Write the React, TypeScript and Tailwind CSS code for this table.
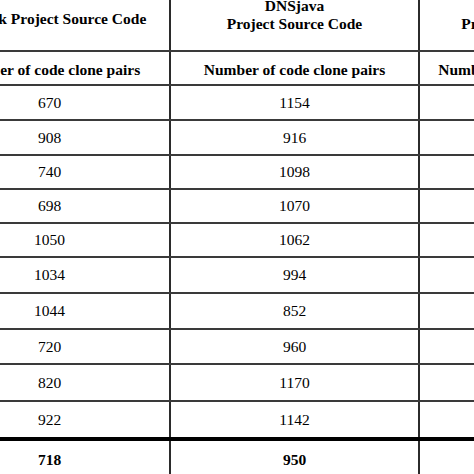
const rows = [
  ['670', '1154', '882'],
  ['908', '916', '1016'],
  ['740', '1098', '934'],
  ['698', '1070', '958'],
  ['1050', '1062', '1002'],
  ['1034', '994', '976'],
  ['1044', '852', '890'],
  ['720', '960', '1048'],
  ['820', '1170', '942'],
  ['922', '1142', '1010'],
]

// row heights (incl. 2px bottom rule) measured off the scan
const heights = ['h-[35px]', 'h-[35px]', 'h-[34px]', 'h-[34px]', 'h-[34px]', 'h-[36px]', 'h-[36px]', 'h-[35px]', 'h-[37px]', 'h-[39px]']

const c1 = 'w-[241px] shrink-0 border-r-2 border-[#2b2b2b] flex items-center justify-center'
const c2 = 'w-[249px] shrink-0 border-r-2 border-[#2b2b2b] flex items-center justify-center'
const c3 = 'w-[218px] shrink-0 flex items-center justify-center'

const h1 = 'w-[241px] shrink-0 border-r-2 border-[#2b2b2b] flex items-start justify-center'
const h2 = 'w-[249px] shrink-0 border-r-2 border-[#2b2b2b] flex items-start justify-center'
const h3 = 'w-[218px] shrink-0 flex items-start justify-center'

export default function App() {
  return (
    <div
      className="w-[474px] h-[474px] overflow-hidden bg-white text-black"
      style={{ fontFamily: '"Liberation Serif", "Times New Roman", serif' }}
    >
      <div className="-ml-[70px] w-[708px] text-[15.5px]">

        {/* Project header */}
        <div className="flex h-[52px] border-b-2 border-[#3a3a3a] font-bold leading-[17.5px]">
          <div className={h1}>
            <span className="mt-[10px] whitespace-nowrap">Outlook Project Source Code</span>
          </div>
          <div className={h2}>
            <div className="-mt-[3px] text-center whitespace-nowrap">
              <div>DNSjava</div>
              <div>Project Source Code</div>
            </div>
          </div>
          <div className={h3}>
            <div className="-mt-[3px] text-center whitespace-nowrap">
              <div>JHotDraw</div>
              <div>Project Source Code</div>
            </div>
          </div>
        </div>

        {/* Column labels */}
        <div className="flex h-[34px] border-b-2 border-[#3a3a3a] font-bold">
          <div className={c1}><span className="pt-[3px] whitespace-nowrap">Number of code clone pairs</span></div>
          <div className={c2}><span className="pt-[3px] whitespace-nowrap">Number of code clone pairs</span></div>
          <div className={c3}><span className="pt-[3px] whitespace-nowrap">Number of code clone pairs</span></div>
        </div>

        {rows.map((r, i) => (
          <div
            key={i}
            className={`flex ${heights[i]} ${i === rows.length - 1 ? 'border-b-4 border-black' : 'border-b-2 border-[#3a3a3a]'}`}
          >
            <div className={c1}>{r[0]}</div>
            <div className={c2}>{r[1]}</div>
            <div className={c3}>{r[2]}</div>
          </div>
        ))}

        {/* Average */}
        <div className="flex h-[40px] font-bold">
          <div className={c1}><span className="-mt-[2px]">718</span></div>
          <div className={c2}><span className="-mt-[2px]">950</span></div>
          <div className={c3}><span className="-mt-[2px]">966</span></div>
        </div>
      </div>
    </div>
  )
}
